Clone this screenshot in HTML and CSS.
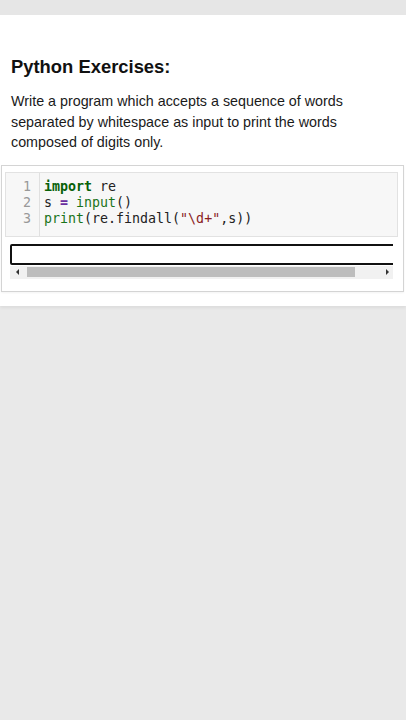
FILE: index.html
```html
<!DOCTYPE html>
<html>
<head>
<meta charset="utf-8">
<link rel="stylesheet" href="styles.css">
</head>
<body>
<div class="topband"></div>
<main class="card">
  <h1 class="title">Python Exercises:</h1>
  <p class="desc">Write a program which accepts a sequence of words separated by whitespace as input to print the words composed of digits only.</p>
  <section class="frame">
    <div class="editor">
      <div class="gutter">
        <div class="ln">1</div>
        <div class="ln">2</div>
        <div class="ln">3</div>
      </div>
      <div class="code">
        <div class="line"><span class="kw">import</span> re</div>
        <div class="line">s <span class="op">=</span> <span class="bi">input</span>()</div>
        <div class="line"><span class="bi">print</span>(re.findall(<span class="str">"\d+"</span>,s))</div>
      </div>
    </div>
    <div class="outwrap">
      <div class="outclip"><div class="outbox"></div></div>
      <div class="scrollbar">
        <span class="arrow left"></span>
        <span class="thumb"></span>
        <span class="arrow right"></span>
      </div>
    </div>
  </section>
</main>
</body>
</html>
```
FILE: styles.css
```css
html, body {
  margin: 0;
  padding: 0;
}
body {
  background: #e9e9e9;
  width: 406px;
  height: 720px;
  overflow: hidden;
  font-family: "Liberation Sans", Arial, sans-serif;
  color: #111;
}
.topband {
  height: 15px;
  background: #e6e6e6;
}
.card {
  background: #fff;
  height: 291px;
  box-sizing: border-box;
  padding-top: 41px;
  box-shadow: 0 2px 3px rgba(0,0,0,0.06);
}
.title {
  margin: 0 0 0 11px;
  font-size: 18.4px;
  line-height: 21px;
  font-weight: bold;
  color: #111;
}
.desc {
  margin: 14px 0 0 11px;
  width: 345px;
  font-size: 14.3px;
  line-height: 20.5px;
  color: #1a1a1a;
}
.frame {
  margin: 12px 2px 0 1px;
  border: 1px solid #d4d4d4;
  padding: 6px 5px 12px 3px;
  box-shadow: 0 1px 2px rgba(0,0,0,0.05);
}
.editor {
  display: flex;
  background: #f7f7f7;
  border: 1px solid #e2e2e2;
}
.gutter {
  width: 34px;
  border-right: 1px solid #e0e0e0;
  padding-top: 6px;
  padding-bottom: 7px;
  box-sizing: border-box;
}
.ln {
  font-family: "DejaVu Sans Mono", monospace;
  font-size: 13.3px;
  line-height: 16.4px;
  text-align: right;
  padding-right: 8px;
  color: #999;
}
.code {
  padding: 6px 0 8px 4px;
  font-family: "DejaVu Sans Mono", monospace;
  font-size: 13.3px;
  line-height: 16.4px;
  color: #222;
}
.line {
  white-space: pre;
}
.kw { color: #086108; font-weight: bold; }
.bi { color: #1a741a; }
.op { color: #6a2fa0; font-weight: bold; }
.str { color: #8b1d1d; }
.outwrap {
  margin: 7px 0 0 5px;
  width: 383px;
}
.outclip {
  overflow: hidden;
  width: 383px;
}
.outbox {
  width: 420px;
  height: 17px;
  border: 2px solid #111;
  border-radius: 2px 0 0 2px;
  background: #fff;
}
.scrollbar {
  margin-top: 1px;
  height: 13px;
  background: #f1f1f1;
  display: flex;
  align-items: center;
}
.arrow {
  width: 0;
  height: 0;
  border-top: 3px solid transparent;
  border-bottom: 3px solid transparent;
}
.arrow.left {
  border-right: 3px solid #333;
  margin-left: 6px;
}
.arrow.right {
  border-left: 3px solid #333;
  margin-left: 31px;
}
.thumb {
  width: 328px;
  height: 10px;
  background: #bdbdbd;
  margin-left: 8px;
}
```
